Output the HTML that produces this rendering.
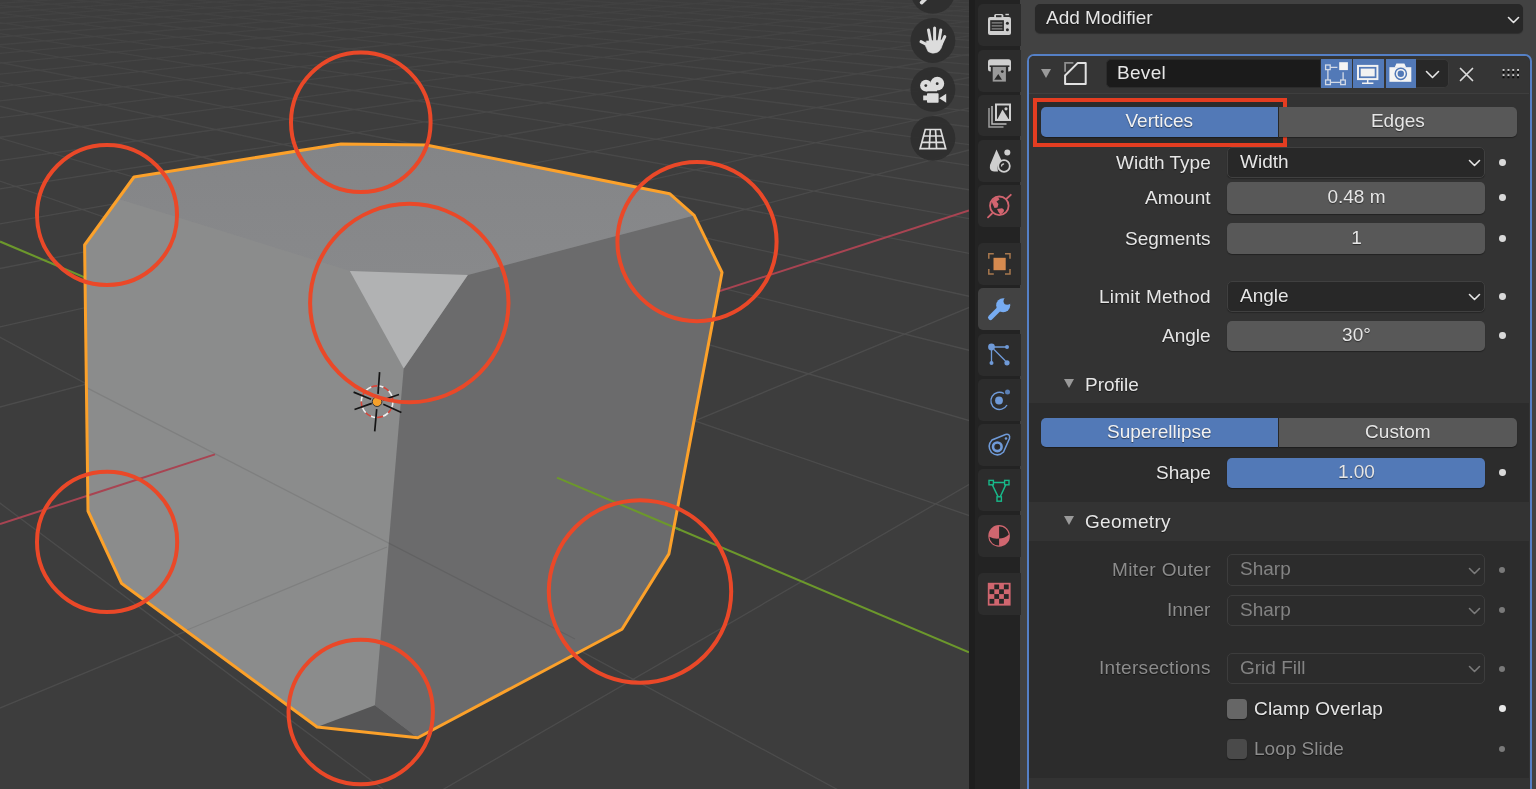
<!DOCTYPE html>
<html><head><meta charset="utf-8"><style>
*{box-sizing:border-box}
body{margin:0;width:1536px;height:789px;overflow:hidden;position:relative;background:#3a3a3a;font-family:"Liberation Sans",sans-serif;}
.a{position:absolute}
.t{white-space:nowrap;font-family:"Liberation Sans",sans-serif;will-change:transform}
svg.a{overflow:visible}
</style></head><body>
<svg width="969" height="789" viewBox="0 0 969 789" style="position:absolute;left:0;top:0">
<rect width="969" height="789" fill="#3d3d3d"/>
<defs><linearGradient id="gf" x1="0" y1="0" x2="0" y2="789" gradientUnits="userSpaceOnUse"><stop offset="0" stop-color="#fff" stop-opacity="0.3"/><stop offset="0.08" stop-color="#fff" stop-opacity="0.55"/><stop offset="0.25" stop-color="#fff" stop-opacity="0.9"/><stop offset="0.45" stop-color="#fff" stop-opacity="1"/></linearGradient><mask id="gm" maskUnits="userSpaceOnUse" x="0" y="0" width="969" height="789"><rect width="969" height="789" fill="url(#gf)"/></mask></defs>
<path d="M-5.0 -4.4L5.3 -5.0M-5.0 -0.5L64.5 -5.0M-5.0 3.6L124.6 -5.0M-5.0 8.1L185.6 -5.0M-5.0 13.0L247.5 -5.0M-5.0 18.3L310.4 -5.0M-5.0 24.1L374.4 -5.0M-5.0 30.4L439.3 -5.0M-5.0 37.4L505.2 -5.0M-5.0 45.2L572.3 -5.0M-5.0 53.9L640.4 -5.0M-5.0 63.6L709.6 -5.0M-5.0 74.6L780.0 -5.0M-5.0 87.1L851.5 -5.0M-5.0 101.5L924.3 -5.0M-5.0 118.2L975.0 -2.1M-5.0 137.9L975.0 8.0M-5.0 161.3L975.0 20.2M-5.0 189.7L975.0 34.9M-5.0 224.8L975.0 53.2M-5.0 269.5L975.0 76.3M-5.0 328.0L975.0 106.7M-5.0 408.3L975.0 148.4M-5.0 710.1L975.0 305.0M433.6 795.0L975.0 481.1M-5.0 499.4L390.8 795.0M-5.0 334.6L847.5 795.0M-5.0 179.4L975.0 517.6M-5.0 136.6L975.0 422.3M-5.0 105.0L975.0 351.8M-5.0 80.7L975.0 297.6M-5.0 61.5L975.0 254.6M-5.0 45.8L975.0 219.6M-5.0 32.8L975.0 190.7M-5.0 21.9L975.0 166.3M-5.0 12.5L975.0 145.5M-5.0 4.5L975.0 127.5M-5.0 -2.5L975.0 111.8M29.3 -5.0L975.0 98.0M85.4 -5.0L975.0 85.8M142.3 -5.0L975.0 74.8M200.1 -5.0L975.0 65.0M258.7 -5.0L975.0 56.1M318.1 -5.0L975.0 48.1M378.5 -5.0L975.0 40.7M439.7 -5.0L975.0 34.0M501.9 -5.0L975.0 27.8M565.0 -5.0L975.0 22.1M629.1 -5.0L975.0 16.9M694.2 -5.0L975.0 12.0M760.2 -5.0L975.0 7.4M827.3 -5.0L975.0 3.2M895.5 -5.0L975.0 -0.8M964.8 -5.0L975.0 -4.5" stroke="#4c4c4c" stroke-width="1.3" fill="none" mask="url(#gm)"/>
<line x1="0" y1="524" x2="969" y2="210.5" stroke="#a84452" stroke-width="2"/>
<line x1="0" y1="241.5" x2="969" y2="652.3" stroke="#6c982c" stroke-width="2.1"/>
<polygon points="134.0,177.0 341.0,144.0 426.0,145.0 669.6,193.7 694.2,215.4 722.0,272.4 668.9,553.9 622.0,629.2 417.8,737.8 317.1,727.0 121.4,583.2 88.0,511.0 84.6,245.0" fill="#8b8c8c"/>
<defs><linearGradient id="tf" x1="0" y1="145" x2="0" y2="275" gradientUnits="userSpaceOnUse"><stop offset="0" stop-color="#848587"/><stop offset="1" stop-color="#88898b"/></linearGradient></defs>
<polygon points="118.0,199.0 134.0,177.0 341.0,144.0 426.0,145.0 669.6,193.7 694.2,215.4 467.8,275.0 349.8,271.0" fill="url(#tf)"/>
<polygon points="118.0,199.0 349.8,271.0 403.7,368.4 374.9,705.2 317.1,727.0 121.4,583.2 88.0,511.0 84.6,245.0" fill="#8b8c8c"/>
<polygon points="467.8,275.0 694.2,215.4 722.0,272.4 668.9,553.9 622.0,629.2 417.8,737.8 374.9,705.2 403.7,368.4" fill="#6b6b6c"/>
<polygon points="349.8,271.0 467.8,275.0 403.7,368.4" fill="#b1b2b3"/>
<path d="M86 387.3 L575 639 M387 547 L187 630" stroke="#000" stroke-opacity="0.09" stroke-width="1.3" fill="none"/>
<polygon points="317.1,727.0 417.8,737.8 374.9,705.2" fill="#555556"/>
<line x1="88" y1="495.5" x2="215" y2="454.4" stroke="#a84452" stroke-width="2"/>
<line x1="557" y1="477.6" x2="680.5" y2="530" stroke="#6c982c" stroke-width="2.1"/>
<polygon points="134.0,177.0 341.0,144.0 426.0,145.0 669.6,193.7 694.2,215.4 722.0,272.4 668.9,553.9 622.0,629.2 417.8,737.8 317.1,727.0 121.4,583.2 88.0,511.0 84.6,245.0" fill="none" stroke="#fca12a" stroke-width="3" stroke-linejoin="round"/>
<g>
<circle cx="377.1" cy="401.7" r="15.8" fill="none" stroke="#eeeeee" stroke-width="1.6" stroke-dasharray="6.2 6.2"/>
<circle cx="377.1" cy="401.7" r="15.8" fill="none" stroke="#d8463a" stroke-width="1.6" stroke-dasharray="6.2 6.2" stroke-dashoffset="6.2"/>
<path d="M379.6 372.1L378 393.9M376.7 409.1L374.7 431.4M353.6 392.1L371 399.2M354.5 409.5L371.8 403.4M399 394.5L383 400M383.3 404.2L401.4 412.4" stroke="#151515" stroke-width="1.7"/>
<circle cx="377.1" cy="401.7" r="4.8" fill="#f5a02a" stroke="#333" stroke-width="1"/>
</g>
<circle cx="107.0" cy="215.0" r="70.0" fill="none" stroke="#ea4828" stroke-width="4"/>
<circle cx="360.8" cy="122.2" r="69.8" fill="none" stroke="#ea4828" stroke-width="4"/>
<circle cx="697.0" cy="241.6" r="79.6" fill="none" stroke="#ea4828" stroke-width="4"/>
<circle cx="409.3" cy="303.0" r="99.2" fill="none" stroke="#ea4828" stroke-width="4"/>
<circle cx="107.1" cy="541.9" r="70.1" fill="none" stroke="#ea4828" stroke-width="4"/>
<circle cx="640.0" cy="591.5" r="91.2" fill="none" stroke="#ea4828" stroke-width="4"/>
<circle cx="360.7" cy="712.0" r="72.2" fill="none" stroke="#ea4828" stroke-width="4"/>
<circle cx="932.9" cy="-8.7" r="22.4" fill="#2d2d2d" fill-opacity="0.9"/>
<circle cx="932.9" cy="40.5" r="22.4" fill="#2d2d2d" fill-opacity="0.9"/>
<circle cx="932.9" cy="89.4" r="22.4" fill="#2d2d2d" fill-opacity="0.9"/>
<circle cx="932.9" cy="138.3" r="22.4" fill="#2d2d2d" fill-opacity="0.9"/>
<path d="M921.6 2.6 L926 -1.5" stroke="#dcdcdc" stroke-width="3.6" stroke-linecap="round"/>
<g fill="#dcdcdc" stroke="#dcdcdc" stroke-linecap="round">
<path d="M928.5 30 L930.6 41 M934.6 28 L934.6 40.5 M940.8 30 L939 41 M944.8 36.5 L941.5 43.5 M921 41.6 L927.5 45" stroke-width="3"/>
<path d="M926.5 41 L943 40 Q942.5 50 937 52.5 Q932 54.5 928 51.5 L925.5 46 Z" stroke-width="0.5"/>
</g>
<g fill="#dcdcdc">
<circle cx="926" cy="85.6" r="5.9"/><circle cx="937.3" cy="83.7" r="6.9"/><rect x="926" y="83" width="11" height="8.3"/>
<rect x="927" y="93.2" width="11.6" height="9.6" rx="0.8"/><rect x="923.2" y="95.5" width="4.2" height="4.8"/>
<path d="M939.2 98.2 L946.2 93.8 V102.8 Z"/>
</g>
<circle cx="925.8" cy="85.6" r="1.4" fill="#2d2d2d"/><circle cx="937.2" cy="83.7" r="1.4" fill="#2d2d2d"/>
<g fill="none" stroke="#dcdcdc" stroke-width="1.7">
<path d="M925.3 129.5 H940.6 L945.7 148.7 H920.1 Z"/>
<path d="M923.5 136 H942.4 M921.8 142.3 H944 M930.3 129.5 L929.2 148.7 M935.5 129.5 L936.6 148.7"/>
</g>
</svg>
<div class="a" style="left:969.0px;top:0.0px;width:6.0px;height:789.0px;background:#1e1e1e;"></div>
<div class="a" style="left:975.0px;top:0.0px;width:45.0px;height:789.0px;background:#232323;"></div>
<div class="a" style="left:1020.0px;top:0.0px;width:516.0px;height:789.0px;background:#424242;"></div>
<div class="a" style="left:977.5px;top:4.0px;width:43.0px;height:42.0px;background:#2c2c2c;border-radius:5px 0 0 5px;"></div>
<div class="a" style="left:977.5px;top:49.5px;width:43.0px;height:42.0px;background:#2c2c2c;border-radius:5px 0 0 5px;"></div>
<div class="a" style="left:977.5px;top:94.7px;width:43.0px;height:41.8px;background:#2c2c2c;border-radius:5px 0 0 5px;"></div>
<div class="a" style="left:977.5px;top:139.7px;width:43.0px;height:42.3px;background:#2c2c2c;border-radius:5px 0 0 5px;"></div>
<div class="a" style="left:977.5px;top:185.0px;width:43.0px;height:42.0px;background:#2c2c2c;border-radius:5px 0 0 5px;"></div>
<div class="a" style="left:977.5px;top:242.8px;width:43.0px;height:41.8px;background:#2c2c2c;border-radius:5px 0 0 5px;"></div>
<div class="a" style="left:977.5px;top:288.3px;width:49.0px;height:41.8px;background:#424242;border-radius:5px 0 0 5px;"></div>
<div class="a" style="left:977.5px;top:333.5px;width:43.0px;height:42.0px;background:#2c2c2c;border-radius:5px 0 0 5px;"></div>
<div class="a" style="left:977.5px;top:378.5px;width:43.0px;height:42.8px;background:#2c2c2c;border-radius:5px 0 0 5px;"></div>
<div class="a" style="left:977.5px;top:423.5px;width:43.0px;height:42.4px;background:#2c2c2c;border-radius:5px 0 0 5px;"></div>
<div class="a" style="left:977.5px;top:468.7px;width:43.0px;height:42.7px;background:#2c2c2c;border-radius:5px 0 0 5px;"></div>
<div class="a" style="left:977.5px;top:514.8px;width:43.0px;height:41.8px;background:#2c2c2c;border-radius:5px 0 0 5px;"></div>
<div class="a" style="left:977.5px;top:572.5px;width:43.0px;height:42.5px;background:#2c2c2c;border-radius:5px 0 0 5px;"></div>
<svg class="a" style="left:969px;top:0" width="67" height="789" viewBox="969 0 67 789"><rect x="988" y="16.9" width="23" height="18" rx="2" fill="#cfcfcf"/><rect x="994.2" y="13.9" width="9.2" height="4.5" rx="1.5" fill="#cfcfcf"/><rect x="996" y="15.2" width="5.5" height="2" fill="#2b2b2b"/><rect x="1005.4" y="13.8" width="3.5" height="1.4" fill="#cfcfcf"/><rect x="990.2" y="20.2" width="13.7" height="10.8" fill="#2b2b2b"/><path d="M991.7 22.8h10.7M991.7 25.8h10.7M991.7 28.8h10.7" stroke="#8a8a8a" stroke-width="1.3"/><circle cx="1007.4" cy="23.2" r="1.5" fill="#2b2b2b"/><circle cx="1007.4" cy="29.8" r="1.5" fill="#2b2b2b"/><rect x="988" y="59.3" width="23" height="12.2" rx="2.5" fill="#cfcfcf"/><rect x="989.6" y="65.4" width="19.8" height="1.6" fill="#2b2b2b"/><rect x="990.8" y="67" width="17.4" height="6" fill="#2b2b2b"/><rect x="992.7" y="66.9" width="13.2" height="14.7" fill="#9a9a9a"/><path d="M994.2 79.8 L998.3 74 L1002 79.8 Z" fill="#2b2b2b"/><circle cx="1002.3" cy="71.6" r="1.4" fill="#2b2b2b"/><path d="M989 108v19h14.5" fill="none" stroke="#9c9c9c" stroke-width="1.5"/><path d="M992 106v18h14.5" fill="none" stroke="#bcbcbc" stroke-width="1.5"/><rect x="995" y="103.5" width="16" height="17.5" fill="#cfcfcf"/><rect x="997" y="105.5" width="12" height="13.5" fill="#2b2b2b"/><path d="M997.5 119 L1002.5 109.5 L1008.5 119 Z" fill="#cfcfcf"/><circle cx="1006" cy="108.8" r="1.6" fill="#cfcfcf"/><path d="M996.5 149.5 L990 165 Q989 171 994 171.5 L998 171.5 Q996 165 1001.5 160.5 Z" fill="#cfcfcf"/><circle cx="1004" cy="166" r="5.8" fill="none" stroke="#cfcfcf" stroke-width="1.8"/><path d="M1001.5 166.5 a2.6 2.6 0 0 1 2.6 -2.6" fill="none" stroke="#cfcfcf" stroke-width="1.2"/><circle cx="1007.3" cy="152.5" r="3" fill="#cfcfcf"/><circle cx="999.3" cy="205.8" r="9.3" fill="none" stroke="#d2646f" stroke-width="1.8"/><path d="M991.5 201.5 Q994 197.5 998 197.3 L999.5 199.5 L996.5 201.5 L998.5 204 L997.5 207.5 L994.5 208 Z M997 209 L1002 208.3 Q1005 209.5 1003.5 212 L1000.5 214.8 L998.5 212 Z" fill="#d2646f"/><path d="M988 217.3 L992 213.5 M1006.8 198.5 L1010.8 194.8" stroke="#d2646f" stroke-width="1.8" stroke-linecap="round"/><rect x="993.5" y="257.8" width="12.2" height="12.4" fill="#d68a4f"/><path d="M988.8 258.8v-5h5M1005 253.8h5v5M1010 269v5h-5M993.8 274h-5v-5" fill="none" stroke="#a8784e" stroke-width="1.5"/><path d="M990.5 317.5 L999.5 308.5" stroke="#77acf2" stroke-width="5" stroke-linecap="round"/><circle cx="1003.2" cy="305.2" r="7" fill="#77acf2"/><circle cx="1007.2" cy="301.2" r="3.6" fill="#424242"/><path d="M1003.6 301 L1009 295.6 L1011.5 298 L1006 303.6 Z" fill="#424242"/><circle cx="991.5" cy="347" r="3.4" fill="#6f9ad8"/><circle cx="1007" cy="347" r="2" fill="#6f9ad8"/><circle cx="991.5" cy="363" r="2" fill="#6f9ad8"/><circle cx="1007" cy="362.8" r="2.6" fill="#6f9ad8"/><path d="M994 347h12M991.5 350v12M994 349.5 L1005.5 361" stroke="#6f9ad8" stroke-width="1.3"/><path d="M1007 405 A8.6 8.6 0 1 1 1004 393.5" fill="none" stroke="#6f9ad8" stroke-width="1.4"/><circle cx="999" cy="400.5" r="3.9" fill="#6f9ad8"/><circle cx="1007.5" cy="392" r="2.5" fill="#5a7fb5"/><path d="M991.5 452.5 Q986.5 446 992 440 L1005.5 434.5 Q1010.5 433.5 1009.5 438.5 L1003.5 452 Q998 457.5 991.5 452.5 Z" fill="none" stroke="#6f9ad8" stroke-width="1.5"/><circle cx="997.3" cy="446.8" r="4.3" fill="none" stroke="#6f9ad8" stroke-width="2.6"/><circle cx="997.3" cy="446.8" r="1.7" fill="#262626"/><circle cx="1006" cy="438.5" r="1.3" fill="#6f9ad8"/><path d="M991.2 482.6 L1006.8 482.6 L999.2 499 Z" fill="none" stroke="#18b98a" stroke-width="1.5"/><rect x="989.0" y="480.4" width="4.4" height="4.4" fill="#2b2b2b" stroke="#18b98a" stroke-width="1.4"/><rect x="1004.6" y="480.4" width="4.4" height="4.4" fill="#2b2b2b" stroke="#18b98a" stroke-width="1.4"/><rect x="997.0" y="496.8" width="4.4" height="4.4" fill="#2b2b2b" stroke="#18b98a" stroke-width="1.4"/><circle cx="999.1" cy="535.9" r="10.8" fill="#d0666f"/><path d="M999.1 526.6 V538.6 Q1005 538.4 1008.8 534.6 A9.4 9.4 0 0 0 999.1 526.6 Z M989.4 536.8 Q994 539.3 999.1 538.6 V545.6 A9.4 9.4 0 0 1 989.4 536.8 Z" fill="#262626"/><rect x="987.8" y="582.8" width="22.8" height="22.8" fill="#d0666f"/><rect x="994.3" y="584.5" width="4.8" height="4.8" fill="#262626"/><rect x="1003.9" y="584.5" width="4.8" height="4.8" fill="#262626"/><rect x="989.5" y="589.3" width="4.8" height="4.8" fill="#262626"/><rect x="999.1" y="589.3" width="4.8" height="4.8" fill="#262626"/><rect x="994.3" y="594.1" width="4.8" height="4.8" fill="#262626"/><rect x="1003.9" y="594.1" width="4.8" height="4.8" fill="#262626"/><rect x="989.5" y="598.9" width="4.8" height="4.8" fill="#262626"/><rect x="999.1" y="598.9" width="4.8" height="4.8" fill="#262626"/></svg>
<div class="a" style="left:1035.0px;top:4.0px;width:488.0px;height:29.2px;background:#282828;border-radius:5px;box-shadow:0 1px 1px rgba(0,0,0,0.3);"></div>
<div class="a t" style="left:1045.5px;top:8.3px;font-size:19px;line-height:19px;color:#e6e6e6;text-shadow:0 1px 1px rgba(0,0,0,0.55);">Add Modifier</div>
<svg class="a" style="left:1507.2px;top:15.5px" width="13" height="9"><path d="M1.5 1.5 L6.5 6.5 L11.5 1.5" fill="none" stroke="#e6e6e6" stroke-width="1.6" stroke-linecap="round" stroke-linejoin="round"/></svg>
<div class="a" style="left:1026.6px;top:54px;width:505.2px;height:760px;border:2px solid #5580c6;border-radius:7px;background:#333333;overflow:hidden">
</div>
<div class="a" style="left:1028.5px;top:56.2px;width:500.6px;height:37.3px;background:#353535;border-radius:5px 5px 0 0;"></div>
<div class="a" style="left:1028.5px;top:93.2px;width:500.6px;height:1.0px;background:#3e3e3e;"></div>
<svg class="a" style="left:1041.0px;top:68.8px" width="10" height="9"><path d="M0 0 L10 0 L5.0 9 Z" fill="#9a9a9a"/></svg>
<svg class="a" style="left:1036px;top:56px" width="70" height="36"><path d="M29.1 28 V19.5 L41.8 6.9 H49.7 V28 Z" fill="none" stroke="#e2e2e2" stroke-width="2" stroke-linejoin="round"/><path d="M29.1 15.7 V6.9 H37.4" fill="none" stroke="#8e8e8e" stroke-width="1.8"/></svg>
<div class="a" style="left:1105.5px;top:59.0px;width:215.5px;height:28.8px;background:#1b1b1b;border-radius:5px 0 0 5px;border:1px solid #2c2c2c;"></div>
<div class="a t" style="left:1116.8px;top:63.4px;font-size:19px;line-height:19px;color:#e6e6e6;letter-spacing:0.3px;">Bevel</div>
<div class="a" style="left:1321.0px;top:59.0px;width:30.6px;height:28.7px;background:#5279b7;"></div>
<div class="a" style="left:1353.4px;top:59.0px;width:30.6px;height:28.7px;background:#5279b7;"></div>
<div class="a" style="left:1385.7px;top:59.0px;width:30.6px;height:28.7px;background:#5279b7;"></div>
<div class="a" style="left:1416.3px;top:58.6px;width:33.2px;height:29.5px;background:#282828;border-radius:0 5px 5px 0;border:1px solid #3a3a3a;border-left:none;"></div>
<svg class="a" style="left:1425.0px;top:69.5px" width="15" height="10"><path d="M1.5 1.5 L7.5 7.5 L13.5 1.5" fill="none" stroke="#e6e6e6" stroke-width="1.6" stroke-linecap="round" stroke-linejoin="round"/></svg>
<svg class="a" style="left:1316px;top:54px" width="140" height="40">
<g fill="none" stroke="#d3dae6" stroke-width="1.3"><rect x="9.6" y="11" width="4.6" height="4.6"/><rect x="9.6" y="26" width="4.8" height="4.6"/><rect x="24.7" y="26" width="4.6" height="4.6"/><path d="M14.2 13.3 H21.4 M11.9 15.6 V26 M14.4 28.3 H24.7 M27.1 18.2 V26"/></g><rect x="23.2" y="8.2" width="8.7" height="7.9" fill="#f4f4f4"/>
<rect x="42" y="11.9" width="19.4" height="13.2" fill="none" stroke="#f2f2f2" stroke-width="2"/><rect x="44.7" y="14.6" width="14" height="7.8" fill="#f2f2f2"/><path d="M51.7 25.5 V29 M46 29.3 H57.4" stroke="#f2f2f2" stroke-width="1.5"/>
<rect x="73.4" y="13.2" width="21.9" height="14.6" fill="#f4f4f4"/><path d="M78.6 13.6 L80.4 9.6 H88.4 L90.2 13.6 Z" fill="#f4f4f4"/><circle cx="84.8" cy="19.8" r="5.6" fill="none" stroke="#5279b7" stroke-width="1.5"/><circle cx="84.8" cy="19.8" r="3.2" fill="#5279b7"/>
</svg>
<svg class="a" style="left:1459px;top:66.5px" width="15" height="15"><path d="M1.5 1.5 L13.5 13.5 M13.5 1.5 L1.5 13.5" stroke="#dcdcdc" stroke-width="1.7" stroke-linecap="round"/></svg>
<svg class="a" style="left:1500px;top:66px" width="24" height="16"><rect x="2.6" y="3.0" width="1.9" height="1.9" fill="#c8c8c8"/><rect x="2.6" y="5.1" width="1.9" height="1.9" fill="#0a0a0a"/><rect x="2.6" y="8.2" width="1.9" height="1.9" fill="#c8c8c8"/><rect x="2.6" y="10.3" width="1.9" height="1.9" fill="#0a0a0a"/><rect x="7.5" y="3.0" width="1.9" height="1.9" fill="#c8c8c8"/><rect x="7.5" y="5.1" width="1.9" height="1.9" fill="#0a0a0a"/><rect x="7.5" y="8.2" width="1.9" height="1.9" fill="#c8c8c8"/><rect x="7.5" y="10.3" width="1.9" height="1.9" fill="#0a0a0a"/><rect x="12.3" y="3.0" width="1.9" height="1.9" fill="#c8c8c8"/><rect x="12.3" y="5.1" width="1.9" height="1.9" fill="#0a0a0a"/><rect x="12.3" y="8.2" width="1.9" height="1.9" fill="#c8c8c8"/><rect x="12.3" y="10.3" width="1.9" height="1.9" fill="#0a0a0a"/><rect x="17.1" y="3.0" width="1.9" height="1.9" fill="#c8c8c8"/><rect x="17.1" y="5.1" width="1.9" height="1.9" fill="#0a0a0a"/><rect x="17.1" y="8.2" width="1.9" height="1.9" fill="#c8c8c8"/><rect x="17.1" y="10.3" width="1.9" height="1.9" fill="#0a0a0a"/></svg>
<div class="a" style="left:1033.0px;top:97.6px;width:253.8px;height:49.0px;background:#2b2b2b;border:4.1px solid #e43d21;box-sizing:border-box;"></div>
<div class="a" style="left:1041.0px;top:107.2px;width:236.5px;height:29.6px;background:#5279b7;border-radius:5px 0 0 5px;box-shadow:0 1px 1px rgba(0,0,0,0.35);"></div>
<div class="a" style="left:1279.0px;top:107.4px;width:237.7px;height:29.2px;background:#585858;border-radius:0 5px 5px 0;box-shadow:0 1px 1px rgba(0,0,0,0.35);"></div>
<div class="a t" style="left:1041px;width:236.5px;text-align:center;top:111.4px;font-size:19px;line-height:19px;color:#f2f2f2;text-shadow:0 1px 1px rgba(0,0,0,0.5)">Vertices</div>
<div class="a t" style="left:1279px;width:237.7px;text-align:center;top:111.4px;font-size:19px;line-height:19px;color:#e6e6e6;text-shadow:0 1px 1px rgba(0,0,0,0.5)">Edges</div>
<div class="a t" style="right:325.5px;text-align:right;top:152.7px;font-size:19px;line-height:19px;color:#e6e6e6;text-shadow:0 1px 1px rgba(0,0,0,0.55);">Width Type</div>
<div class="a" style="left:1226.6px;top:147.0px;width:258.9px;height:31.2px;background:#282828;border-radius:5px;border:1px solid #404040;box-shadow:0 1px 1px rgba(0,0,0,0.25);"></div><div class="a t" style="left:1240.1px;top:151.8px;font-size:19px;line-height:19px;color:#e6e6e6;text-shadow:0 1px 1px rgba(0,0,0,0.55);">Width</div><svg class="a" style="left:1468.0px;top:159.1px" width="13" height="9"><path d="M1.5 1.5 L6.5 6.5 L11.5 1.5" fill="none" stroke="#e6e6e6" stroke-width="1.6" stroke-linecap="round" stroke-linejoin="round"/></svg>
<div class="a" style="left:1498.8px;top:159.2px;width:6.8px;height:6.8px;border-radius:50%;background:#d9d9d9"></div>
<div class="a t" style="right:325.5px;text-align:right;top:188.0px;font-size:19px;line-height:19px;color:#e6e6e6;text-shadow:0 1px 1px rgba(0,0,0,0.55);">Amount</div>
<div class="a" style="left:1226.6px;top:182.4px;width:258.9px;height:31.5px;background:#585858;border-radius:5px;box-shadow:0 1px 1px rgba(0,0,0,0.35);"></div><div class="a t" style="left:1226.6px;width:258.9px;text-align:center;top:187.4px;font-size:19px;line-height:19px;color:#e6e6e6;text-shadow:0 1px 1px rgba(0,0,0,0.5)">0.48 m</div>
<div class="a" style="left:1498.8px;top:194.4px;width:6.8px;height:6.8px;border-radius:50%;background:#d9d9d9"></div>
<div class="a t" style="right:325.5px;text-align:right;top:228.6px;font-size:19px;line-height:19px;color:#e6e6e6;text-shadow:0 1px 1px rgba(0,0,0,0.55);">Segments</div>
<div class="a" style="left:1226.6px;top:223.4px;width:258.9px;height:30.8px;background:#585858;border-radius:5px;box-shadow:0 1px 1px rgba(0,0,0,0.35);"></div><div class="a t" style="left:1226.6px;width:258.9px;text-align:center;top:228.0px;font-size:19px;line-height:19px;color:#e6e6e6;text-shadow:0 1px 1px rgba(0,0,0,0.5)">1</div>
<div class="a" style="left:1498.8px;top:234.8px;width:6.8px;height:6.8px;border-radius:50%;background:#d9d9d9"></div>
<div class="a t" style="right:325.5px;text-align:right;top:286.9px;font-size:19px;line-height:19px;color:#e6e6e6;text-shadow:0 1px 1px rgba(0,0,0,0.55);letter-spacing:0.25px;margin-right:-0.25px;">Limit Method</div>
<div class="a" style="left:1226.6px;top:281.2px;width:258.9px;height:31.2px;background:#282828;border-radius:5px;border:1px solid #404040;box-shadow:0 1px 1px rgba(0,0,0,0.25);"></div><div class="a t" style="left:1240.1px;top:286.0px;font-size:19px;line-height:19px;color:#e6e6e6;text-shadow:0 1px 1px rgba(0,0,0,0.55);">Angle</div><svg class="a" style="left:1468.0px;top:293.3px" width="13" height="9"><path d="M1.5 1.5 L6.5 6.5 L11.5 1.5" fill="none" stroke="#e6e6e6" stroke-width="1.6" stroke-linecap="round" stroke-linejoin="round"/></svg>
<div class="a" style="left:1498.8px;top:293.2px;width:6.8px;height:6.8px;border-radius:50%;background:#d9d9d9"></div>
<div class="a t" style="right:325.5px;text-align:right;top:325.7px;font-size:19px;line-height:19px;color:#e6e6e6;text-shadow:0 1px 1px rgba(0,0,0,0.55);">Angle</div>
<div class="a" style="left:1226.6px;top:320.5px;width:258.9px;height:30.8px;background:#585858;border-radius:5px;box-shadow:0 1px 1px rgba(0,0,0,0.35);"></div><div class="a t" style="left:1226.6px;width:258.9px;text-align:center;top:325.1px;font-size:19px;line-height:19px;color:#e6e6e6;text-shadow:0 1px 1px rgba(0,0,0,0.5)">30°</div>
<div class="a" style="left:1498.8px;top:332.1px;width:6.8px;height:6.8px;border-radius:50%;background:#d9d9d9"></div>
<svg class="a" style="left:1063.6px;top:379.0px" width="10" height="9"><path d="M0 0 L10 0 L5.0 9 Z" fill="#9a9a9a"/></svg>
<div class="a t" style="left:1085.0px;top:374.6px;font-size:19px;line-height:19px;color:#e6e6e6;text-shadow:0 1px 1px rgba(0,0,0,0.55);">Profile</div>
<div class="a" style="left:1028.5px;top:403.4px;width:500.6px;height:98.3px;background:#2c2c2c;"></div>
<div class="a" style="left:1041.0px;top:417.9px;width:236.5px;height:29.2px;background:#5279b7;border-radius:5px 0 0 5px;box-shadow:0 1px 1px rgba(0,0,0,0.35);"></div>
<div class="a" style="left:1279.0px;top:418.1px;width:237.7px;height:29.0px;background:#585858;border-radius:0 5px 5px 0;box-shadow:0 1px 1px rgba(0,0,0,0.35);"></div>
<div class="a t" style="left:1041px;width:236.5px;text-align:center;top:422.1px;font-size:19px;line-height:19px;color:#f2f2f2;text-shadow:0 1px 1px rgba(0,0,0,0.5)">Superellipse</div>
<div class="a t" style="left:1279px;width:237.7px;text-align:center;top:422.1px;font-size:19px;line-height:19px;color:#e6e6e6;text-shadow:0 1px 1px rgba(0,0,0,0.5)">Custom</div>
<div class="a t" style="right:325.5px;text-align:right;top:462.6px;font-size:19px;line-height:19px;color:#e6e6e6;text-shadow:0 1px 1px rgba(0,0,0,0.55);">Shape</div>
<div class="a" style="left:1226.6px;top:457.8px;width:258.9px;height:30.0px;background:#5279b7;border-radius:5px;box-shadow:0 1px 1px rgba(0,0,0,0.35);"></div><div class="a t" style="left:1226.6px;width:258.9px;text-align:center;top:462.0px;font-size:19px;line-height:19px;color:#e6e6e6;text-shadow:0 1px 1px rgba(0,0,0,0.5)">1.00</div>
<div class="a" style="left:1498.8px;top:469.4px;width:6.8px;height:6.8px;border-radius:50%;background:#d9d9d9"></div>
<svg class="a" style="left:1063.6px;top:516.0px" width="10" height="9"><path d="M0 0 L10 0 L5.0 9 Z" fill="#9a9a9a"/></svg>
<div class="a t" style="left:1085.0px;top:512.1px;font-size:19px;line-height:19px;color:#e6e6e6;text-shadow:0 1px 1px rgba(0,0,0,0.55);letter-spacing:0.3px;">Geometry</div>
<div class="a" style="left:1028.5px;top:541.0px;width:500.6px;height:237.4px;background:#2c2c2c;"></div>
<div class="a t" style="right:325.5px;text-align:right;top:559.9px;font-size:19px;line-height:19px;color:#8c8c8c;text-shadow:0 1px 1px rgba(0,0,0,0.55);letter-spacing:0.36px;margin-right:-0.36px;">Miter Outer</div>
<div class="a" style="left:1226.6px;top:554.3px;width:258.9px;height:31.5px;background:#2c2c2c;border-radius:5px;border:1px solid #3d3d3d;"></div><div class="a t" style="left:1240.1px;top:559.3px;font-size:19px;line-height:19px;color:#838383;">Sharp</div><svg class="a" style="left:1468.0px;top:566.5px" width="13" height="9"><path d="M1.5 1.5 L6.5 6.5 L11.5 1.5" fill="none" stroke="#7a7a7a" stroke-width="1.6" stroke-linecap="round" stroke-linejoin="round"/></svg>
<div class="a" style="left:1499.1px;top:566.7px;width:6.2px;height:6.2px;border-radius:50%;background:#7a7a7a"></div>
<div class="a t" style="right:325.5px;text-align:right;top:600.1px;font-size:19px;line-height:19px;color:#8c8c8c;text-shadow:0 1px 1px rgba(0,0,0,0.55);">Inner</div>
<div class="a" style="left:1226.6px;top:594.5px;width:258.9px;height:31.5px;background:#2c2c2c;border-radius:5px;border:1px solid #3d3d3d;"></div><div class="a t" style="left:1240.1px;top:599.5px;font-size:19px;line-height:19px;color:#838383;">Sharp</div><svg class="a" style="left:1468.0px;top:606.8px" width="13" height="9"><path d="M1.5 1.5 L6.5 6.5 L11.5 1.5" fill="none" stroke="#7a7a7a" stroke-width="1.6" stroke-linecap="round" stroke-linejoin="round"/></svg>
<div class="a" style="left:1499.1px;top:607.1px;width:6.2px;height:6.2px;border-radius:50%;background:#7a7a7a"></div>
<div class="a t" style="right:325.5px;text-align:right;top:658.2px;font-size:19px;line-height:19px;color:#8c8c8c;text-shadow:0 1px 1px rgba(0,0,0,0.55);letter-spacing:0.31px;margin-right:-0.31px;">Intersections</div>
<div class="a" style="left:1226.6px;top:652.6px;width:258.9px;height:31.5px;background:#2c2c2c;border-radius:5px;border:1px solid #3d3d3d;"></div><div class="a t" style="left:1240.1px;top:657.6px;font-size:19px;line-height:19px;color:#838383;">Grid Fill</div><svg class="a" style="left:1468.0px;top:664.9px" width="13" height="9"><path d="M1.5 1.5 L6.5 6.5 L11.5 1.5" fill="none" stroke="#7a7a7a" stroke-width="1.6" stroke-linecap="round" stroke-linejoin="round"/></svg>
<div class="a" style="left:1499.1px;top:665.5px;width:6.2px;height:6.2px;border-radius:50%;background:#7a7a7a"></div>
<div class="a" style="left:1226.8px;top:698.6px;width:20.2px;height:20.1px;background:#666666;border-radius:4px;box-shadow:0 1px 1px rgba(0,0,0,0.4);"></div>
<div class="a t" style="left:1254.0px;top:698.9px;font-size:19px;line-height:19px;color:#e6e6e6;text-shadow:0 1px 1px rgba(0,0,0,0.55);letter-spacing:0.17px;">Clamp Overlap</div>
<div class="a" style="left:1498.8px;top:705.4px;width:6.8px;height:6.8px;border-radius:50%;background:#e8e8e8"></div>
<div class="a" style="left:1226.8px;top:738.8px;width:20.2px;height:20.1px;background:#4a4a4a;border-radius:4px;box-shadow:0 1px 1px rgba(0,0,0,0.4);"></div>
<div class="a t" style="left:1254.0px;top:739.1px;font-size:19px;line-height:19px;color:#8c8c8c;text-shadow:0 1px 1px rgba(0,0,0,0.55);">Loop Slide</div>
<div class="a" style="left:1499.1px;top:745.9px;width:6.2px;height:6.2px;border-radius:50%;background:#7a7a7a"></div>
</body></html>
